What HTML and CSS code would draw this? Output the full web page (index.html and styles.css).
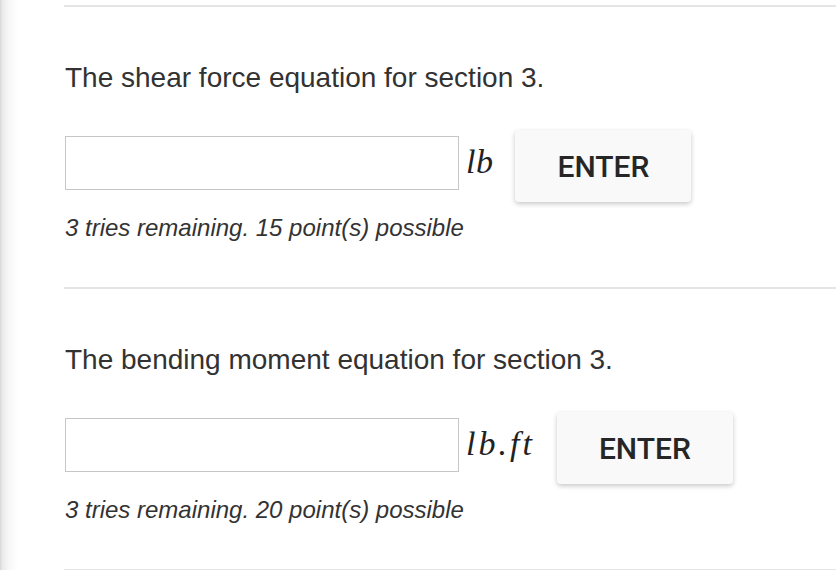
FILE: index.html
```html
<!DOCTYPE html>
<html lang="en">
<head>
<meta charset="utf-8">
<title>Problem</title>
<link rel="stylesheet" href="styles.css">
</head>
<body>
<main class="page">
  <section class="problem">
    <p class="question">The shear force equation for section 3.</p>
    <div class="answer-row">
      <input class="answer" type="text" aria-label="Shear force">
      <span class="unit">lb</span>
      <button class="enter" type="button">ENTER</button>
    </div>
    <p class="tries">3 tries remaining. 15 point(s) possible</p>
  </section>
  <section class="problem">
    <p class="question">The bending moment equation for section 3.</p>
    <div class="answer-row">
      <input class="answer" type="text" aria-label="Bending moment">
      <span class="unit unit-wide">lb.ft</span>
      <button class="enter" type="button">ENTER</button>
    </div>
    <p class="tries">3 tries remaining. 20 point(s) possible</p>
  </section>
  <section class="problem problem-last"></section>
</main>
</body>
</html>
```
FILE: styles.css
```css
html, body {
  margin: 0;
  padding: 0;
  height: 100%;
}

body {
  background: #ffffff linear-gradient(to right, #d6d6d6 0, #e9e9e9 2px, #f6f6f6 8px, #ffffff 18px) no-repeat;
  background-size: 18px 100%;
  font-family: "Liberation Sans", Arial, sans-serif;
  color: #333333;
  overflow: hidden;
}

.page {
  padding: 5px 0 0 64px;
}

.problem {
  border-top: 2px solid #e5e5e5;
  padding: 54px 0 45px 1px;
}

.problem-last {
  padding: 0;
  border-top-width: 1px;
}

.question {
  margin: 0;
  font-size: 28px;
  line-height: 34px;
  color: #323232;
}

.answer-row {
  display: flex;
  align-items: flex-start;
  margin-top: 35px;
}

.answer {
  box-sizing: border-box;
  width: 394px;
  height: 54px;
  margin: 6px 0 0 0;
  border: 1px solid #c6c6c6;
  border-radius: 0;
  background: #ffffff;
  padding: 0 10px;
  font-size: 22px;
  outline: none;
}

.unit {
  font-family: "Liberation Serif", "Times New Roman", serif;
  font-style: italic;
  font-size: 34px;
  line-height: 36px;
  margin: 14px 0 0 7px;
  color: #222222;
  letter-spacing: 0.5px;
}

.unit-wide {
  letter-spacing: 3px;
}

.enter {
  box-sizing: border-box;
  width: 176px;
  height: 72px;
  margin-left: 22px;
  border: none;
  border-radius: 4px;
  background: #f9f9f9;
  box-shadow: 0 2px 5px rgba(0, 0, 0, 0.22);
  font-family: Roboto, "Liberation Sans", sans-serif;
  font-weight: 500;
  font-size: 30px;
  color: #262626;
  padding: 0;
  cursor: pointer;
}

.tries {
  margin: 12px 0 0 0;
  font-size: 24px;
  line-height: 28px;
  font-style: italic;
  color: #333333;
}
```
